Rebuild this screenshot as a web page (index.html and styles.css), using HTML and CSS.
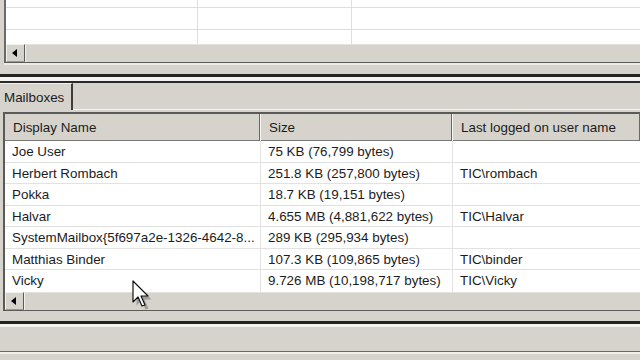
FILE: index.html
```html
<!DOCTYPE html>
<html lang="en">
  <head>
    <meta charset="UTF-8" />
    <title>Mailboxes</title>
    <link rel="stylesheet" href="styles.css">
  </head>
  <body>
    <!-- Upper list (scrolled to the end) -->
    <div class="top-pane">
      <div class="top-grid">
        <div class="trow first"><span></span><span></span><span></span></div>
        <div class="trow"><span></span><span></span><span></span></div>
        <div class="trow last"><span></span><span></span><span></span></div>
      </div>
      <div class="hscroll">
        <div class="sbtn"><i class="arrow"></i></div>
        <div class="track"></div>
      </div>
    </div>

    <div class="splitter"></div>

    <!-- Tabs -->
    <div class="tabs">
      <div class="tab">Mailboxes</div>
      <div class="tab-fill"></div>
    </div>

    <!-- Mailbox list -->
    <div class="list">
      <div class="list-head">
        <div class="hcell">Display Name</div>
        <div class="hcell">Size</div>
        <div class="hcell">Last logged on user name</div>
      </div>
      <div class="list-body">
        <div class="row"><span>Joe User</span><span>75 KB (76,799 bytes)</span><span></span></div>
        <div class="row"><span>Herbert Rombach</span><span>251.8 KB (257,800 bytes)</span><span>TIC\rombach</span></div>
        <div class="row"><span>Pokka</span><span>18.7 KB (19,151 bytes)</span><span></span></div>
        <div class="row"><span>Halvar</span><span>4.655 MB (4,881,622 bytes)</span><span>TIC\Halvar</span></div>
        <div class="row"><span>SystemMailbox{5f697a2e-1326-4642-8...</span><span>289 KB (295,934 bytes)</span><span></span></div>
        <div class="row"><span>Matthias Binder</span><span>107.3 KB (109,865 bytes)</span><span>TIC\binder</span></div>
        <div class="row"><span>Vicky</span><span>9.726 MB (10,198,717 bytes)</span><span>TIC\Vicky</span></div>
      </div>
      <div class="hscroll">
        <div class="sbtn"><i class="arrow"></i></div>
        <div class="track"></div>
      </div>
    </div>

    <div class="status"></div>

    <!-- Mouse pointer -->
    <svg class="cursor" width="20" height="30" viewBox="0 0 20 30">
      <path d="M3 3 L3 24 L8 19 L12 28 L15 27 L11 18 L18 18 Z" fill="rgba(0,0,0,0.25)" transform="translate(1.5,1.5)"/>
      <path d="M1 1 L1 22 L6 17 L10 26 L13 25 L9 16 L16 16 Z" fill="#fff" stroke="#111" stroke-width="1.2" stroke-linejoin="round"/>
    </svg>
  </body>
</html>
```

FILE: styles.css
```css
body {
  margin: 0;
  width: 640px;
  height: 360px;
  overflow: hidden;
  position: relative;
  background: #d6d3cc;
  font-family: "Liberation Sans", Arial, sans-serif;
  font-size: 13.4px;
  color: #1c1c1c;
}

/* upper pane */
.top-pane {
  margin-left: 4px;
  border-left: 2px solid #6a6a68;
  border-bottom: 1px solid #5c5c5a;
  box-shadow: 0 2px 0 #eceae4;
}

.top-grid {
  height: 44px;
  background: #fff;
  overflow: hidden;
}

.trow {
  display: grid;
  grid-template-columns: 192px 154px 1fr;
  height: 22px;
  border-bottom: 1px solid #dedede;
  box-sizing: border-box;
}

.trow.first {
  height: 8px;
}

.trow.last {
  height: 14px;
  border-bottom: none;
}

.trow span {
  border-right: 1px solid #dedede;
}

.trow span:last-child {
  border-right: none;
}

/* horizontal scrollbar */
.hscroll {
  display: flex;
  height: 18px;
  background: #d6d3cc;
}

.sbtn {
  width: 19px;
  box-sizing: border-box;
  border-top: 1px solid #f2f1ec;
  border-left: 1px solid #f2f1ec;
  border-right: 1px solid #5a5a58;
  border-bottom: 1px solid #9a9894;
  display: flex;
  align-items: center;
  padding-left: 5px;
}

.arrow {
  width: 0;
  height: 0;
  border-right: 5px solid #000;
  border-top: 4.5px solid transparent;
  border-bottom: 4.5px solid transparent;
}

.track {
  flex: 1;
  border-left: 1px solid #f2f1ec;
  border-top: 1px solid #e4e2dc;
}

/* splitter between panes */
.splitter {
  margin-top: 11px;
  height: 4px;
  border-top: 3px solid #252525;
  border-bottom: 2px solid #2a2a2a;
  background: #f4f3ef;
}

/* tabs */
.tabs {
  display: flex;
  height: 27px;
}

.tab {
  width: 73px;
  padding-left: 4px;
  box-sizing: border-box;
  line-height: 27px;
  border-right: 2px solid #3c3c3a;
  border-top: 1px solid #f2f1ec;
}

.tab-fill {
  flex: 1;
  border-bottom: 1px solid #f4f3ef;
}

/* mailbox list */
.list {
  margin-top: 2px;
  margin-left: 3px;
  border-top: 2px solid #5a5a58;
  border-left: 2px solid #5a5a58;
  border-bottom: 1px solid #5c5c5a;
}

.list-head {
  display: grid;
  grid-template-columns: 255px 192px 1fr;
  height: 27px;
  border-bottom: 1px solid #7a7874;
  box-sizing: border-box;
}

.hcell {
  padding-left: 8px;
  line-height: 27px;
  border-left: 1px solid #f6f5f1;
  border-right: 1px solid #6a6866;
  white-space: nowrap;
}

.hcell:first-child {
  border-left: none;
}

.list-body {
  background: #fff;
}

.row {
  display: grid;
  grid-template-columns: 256px 192px 1fr;
  height: 21.57px;
  border-bottom: 1px solid #e2e2e2;
  box-sizing: border-box;
}

.row:last-child {
  border-bottom: none;
}

.row span {
  padding-left: 7px;
  line-height: 21px;
  border-right: 1px solid #e2e2e2;
  white-space: nowrap;
  overflow: hidden;
}

.row span:last-child {
  border-right: none;
}

/* bottom status area */
.status {
  margin-top: 10px;
  height: 27px;
  border-top: 3px solid #222;
  border-bottom: 1px solid #6a6a68;
  box-shadow: inset 0 3px 0 #f4f3ef, 0 2px 0 #f0efea;
}

.cursor {
  position: absolute;
  left: 132px;
  top: 280px;
}
```
